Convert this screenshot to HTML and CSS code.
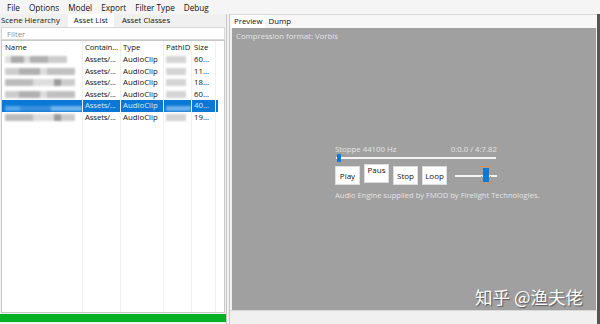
FILE: index.html
```html
<!DOCTYPE html>
<html lang="en">

<head>
    <meta charset="UTF-8">
    <title>AssetStudio</title>
    <link rel="stylesheet" href="styles.css">
</head>

<body>
    <div class="menubar">
        <span class="menu-item">File</span>
        <span class="menu-item">Options</span>
        <span class="menu-item">Model</span>
        <span class="menu-item">Export</span>
        <span class="menu-item">Filter Type</span>
        <span class="menu-item">Debug</span>
    </div>

    <div class="main">
        <div class="left-panel">
            <div class="tabs">
                <span class="tab">Scene Hierarchy</span>
                <span class="tab active">Asset List</span>
                <span class="tab">Asset Classes</span>
            </div>
            <div class="filter">Filter</div>

            <div class="list">
                <div class="row header">
                    <span class="col name">Name</span>
                    <span class="col container">Contain...</span>
                    <span class="col type">Type</span>
                    <span class="col pathid">PathID</span>
                    <span class="col size">Size</span>
                    <span class="col rest"></span>
                </div>
                <div class="row">
                    <span class="col name"><span class="blur b1"></span></span>
                    <span class="col container">Assets/...</span>
                    <span class="col type">AudioClip</span>
                    <span class="col pathid"><span class="blur short"></span></span>
                    <span class="col size">60...</span>
                    <span class="col rest"></span>
                </div>
                <div class="row">
                    <span class="col name"><span class="blur b2"></span></span>
                    <span class="col container">Assets/...</span>
                    <span class="col type">AudioClip</span>
                    <span class="col pathid"><span class="blur short"></span></span>
                    <span class="col size">11...</span>
                    <span class="col rest"></span>
                </div>
                <div class="row">
                    <span class="col name"><span class="blur b3"></span></span>
                    <span class="col container">Assets/...</span>
                    <span class="col type">AudioClip</span>
                    <span class="col pathid"><span class="blur short"></span></span>
                    <span class="col size">18...</span>
                    <span class="col rest"></span>
                </div>
                <div class="row">
                    <span class="col name"><span class="blur b2"></span></span>
                    <span class="col container">Assets/...</span>
                    <span class="col type">AudioClip</span>
                    <span class="col pathid"><span class="blur short"></span></span>
                    <span class="col size">60...</span>
                    <span class="col rest"></span>
                </div>
                <div class="row selected">
                    <span class="col name"><span class="blur sel"></span></span>
                    <span class="col container">Assets/...</span>
                    <span class="col type">AudioClip</span>
                    <span class="col pathid"><span class="blur sel-short"></span></span>
                    <span class="col size">40...</span>
                    <span class="col rest"></span>
                </div>
                <div class="row">
                    <span class="col name"><span class="blur b3"></span></span>
                    <span class="col container">Assets/...</span>
                    <span class="col type">AudioClip</span>
                    <span class="col pathid"><span class="blur short"></span></span>
                    <span class="col size">19...</span>
                    <span class="col rest"></span>
                </div>
                <div class="row filler">
                    <span class="col name"></span>
                    <span class="col container"></span>
                    <span class="col type"></span>
                    <span class="col pathid"></span>
                    <span class="col size"></span>
                    <span class="col rest"></span>
                </div>
            </div>

            <div class="progress"></div>
        </div>

        <div class="right-panel">
            <div class="tabs">
                <span class="tab active">Preview</span>
                <span class="tab">Dump</span>
            </div>
            <div class="preview">
                <div class="format">Compression format: Vorbis</div>

                <div class="player">
                    <div class="status">
                        <span>Stoppe 44100 Hz</span>
                        <span>0:0.0 / 4:7.82</span>
                    </div>
                    <div class="track">
                        <span class="thumb"></span>
                    </div>
                    <div class="controls">
                        <button class="btn">Play</button>
                        <button class="btn raised">Paus</button>
                        <button class="btn">Stop</button>
                        <button class="btn">Loop</button>
                        <div class="volume">
                            <span class="volume-line"></span>
                            <span class="volume-thumb"></span>
                        </div>
                    </div>
                    <div class="credit">Audio Engine supplied by FMOD by Firelight Technologies.</div>
                </div>

                <div class="watermark">知乎 @渔夫佬</div>
            </div>
            <div class="statusbar"></div>
        </div>
    </div>
</body>

</html>
```

FILE: styles.css
```css
* {
    box-sizing: border-box;
    margin: 0;
    padding: 0;
}

body {
    width: 600px;
    height: 324px;
    overflow: hidden;
    background-color: #f0f0f0;
    font-family: 'Open Sans', 'Noto Sans', sans-serif;
    font-size: 7.8px;
    color: #111;
}

.menubar {
    height: 14px;
    display: flex;
    align-items: center;
    padding-left: 7px;
    gap: 9px;
    background-color: #f5f5f5;
    font-size: 8.2px;
}

.main {
    display: flex;
    height: 310px;
}

.left-panel {
    width: 227px;
    display: flex;
    flex-direction: column;
    border-right: 1px solid #c8c8c8;
}

.tabs {
    height: 13px;
    display: flex;
    align-items: center;
    gap: 6px;
    padding-left: 1px;
}

.tab {
    padding: 0 2px;
    line-height: 13px;
}

.left-panel .tab:first-child {
    padding-left: 0;
}

.left-panel .tab.active {
    background-color: #fff;
    margin-top: -1px;
    padding: 0 6px;
}

.filter {
    height: 13px;
    line-height: 12px;
    padding-left: 5px;
    color: #909090;
    background-color: #fff;
    border: 1px solid #d8d8d8;
    margin: 0 1px;
}

.list {
    flex: 1;
    display: flex;
    flex-direction: column;
    background-color: #fff;
    border: 1px solid #c8c8c8;
    margin: 0 1px;
}

.row {
    display: flex;
    height: 11.5px;
    line-height: 11.5px;
}

.row.header {
    height: 13px;
    line-height: 13px;
}

.row.filler {
    flex: 1;
}

.col {
    border-right: 1px solid #f0f0f0;
    padding-left: 2px;
    white-space: nowrap;
    overflow: hidden;
    text-overflow: ellipsis;
}

.col.name {
    width: 81px;
    padding-left: 3px;
    display: flex;
    align-items: center;
}

.col.container {
    width: 38px;
    letter-spacing: -0.15px;
}

.col.type {
    width: 43px;
}

.col.pathid {
    width: 28px;
    display: flex;
    align-items: center;
}

.row.header .col.pathid {
    display: block;
}

.col.size {
    width: 24px;
}

.col.rest {
    flex: 1;
    border-right: none;
}

.row.selected {
    background-color: #0a78d6;
    color: #dcebf8;
    margin-right: 6px;
}

.blur {
    display: block;
    height: 7px;
    filter: blur(1px);
}

.blur.b1 {
    width: 62px;
    background: linear-gradient(90deg, #ddd 0 10%, #aaa 10% 30%, #ddd 30% 40%, #b0b0b0 40% 70%, #ccc 70% 100%);
}

.blur.b2 {
    width: 70px;
    background: linear-gradient(90deg, #ccc 0 20%, #b0b0b0 20% 50%, #ddd 50% 60%, #c0c0c0 60% 100%);
}

.blur.b3 {
    width: 70px;
    background: linear-gradient(90deg, #bbb 0 40%, #ddd 40% 70%, #999 70% 80%, #ccc 80% 100%);
}

.blur.short {
    width: 20px;
    background-color: #d4d4d4;
}

.blur.sel {
    width: 78px;
    height: 5px;
    margin-top: 6px;
    background: linear-gradient(90deg, #5aa8ea 0 20%, #3b8fdc 20% 60%, #70b5ee 60% 100%);
}

.blur.sel-short {
    width: 26px;
    height: 5px;
    margin-top: 6px;
    background-color: #6db2ec;
}

.progress {
    height: 8px;
    margin: 1px 0 2px;
    background-color: #06b025;
}

.right-panel {
    flex: 1;
    display: flex;
    flex-direction: column;
    margin-left: 2px;
    border-left: 1px solid #c8c8c8;
    border-right: 3px solid #555;
}

.right-panel .tabs {
    height: 14px;
    gap: 2px;
    padding-left: 2px;
    background-color: #f7f7f7;
    border-top: 1px solid #d8d8d8;
}

.right-panel .tab.active {
    background-color: #fff;
}

.preview {
    position: relative;
    flex: 1;
    display: flex;
    flex-direction: column;
    margin: 0 1px 0 2px;
    background-color: #a0a0a0;
    color: #e4e4e4;
}

.format {
    padding: 3px 0 0 4px;
}

.player {
    width: 162px;
    margin: auto;
    display: flex;
    flex-direction: column;
    position: relative;
    top: -4px;
    left: 2px;
}

.status {
    display: flex;
    justify-content: space-between;
    line-height: 10px;
}

.track {
    position: relative;
    height: 2px;
    margin: 3px 1px 0;
    background-color: #f4f4f4;
}

.thumb {
    position: absolute;
    left: 1px;
    top: -3px;
    width: 4px;
    height: 8px;
    background-color: #0a78d6;
    border-radius: 1px;
}

.controls {
    display: flex;
    align-items: flex-start;
    gap: 4px;
    margin-top: 7px;
}

.btn {
    width: 25px;
    height: 19px;
    border: 1px solid #ddd;
    background-color: #fff;
    font-family: inherit;
    font-size: 8px;
    color: #111;
}

.btn.raised {
    margin-top: -2px;
    line-height: 10px;
    padding-bottom: 6px;
}

.volume {
    position: relative;
    flex: 1;
    height: 19px;
    margin-left: 4px;
}

.volume-line {
    position: absolute;
    left: 0;
    right: 0;
    top: 9px;
    height: 2px;
    background-color: #f4f4f4;
}

.volume-thumb {
    position: absolute;
    left: 28px;
    top: 2px;
    width: 6px;
    height: 14px;
    background-color: #0a78d6;
    outline: 1px dashed #d09060;
    outline-offset: 1px;
}

.credit {
    margin-top: 5px;
    white-space: nowrap;
    font-size: 7.6px;
}

.watermark {
    position: absolute;
    right: 13px;
    bottom: 3px;
    font-family: 'Noto Sans CJK SC', sans-serif;
    font-size: 17.5px;
    line-height: 20px;
    color: #fff;
    text-shadow: 1px 1px 1px #555;
}

.statusbar {
    height: 14px;
    border-top: 1px solid #d8d8d8;
}
```
